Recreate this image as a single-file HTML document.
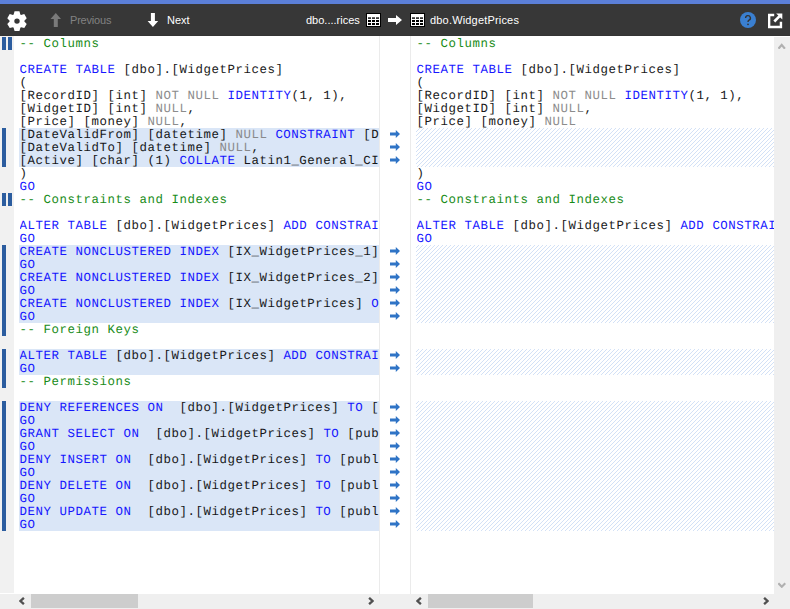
<!DOCTYPE html>
<html><head><meta charset="utf-8"><style>
html,body{margin:0;padding:0}
body{width:790px;height:609px;overflow:hidden;position:relative;background:#fff;font-family:"Liberation Sans",sans-serif}
#top{position:absolute;left:0;top:0;width:790px;height:4px;background:#5b7fd8}
#tb{position:absolute;left:0;top:4px;width:790px;height:32px;background:#373737}
#tbl{position:absolute;left:0;top:35px;width:790px;height:1px;background:#343434}
#tbl2{position:absolute;left:0;top:36px;width:790px;height:1px;background:#f6f6f6;z-index:2}
.tt{position:absolute;top:4px;height:32px;line-height:32px;font-size:11px;white-space:nowrap}
#lg{position:absolute;left:0;top:36px;width:14px;height:557px;background:#f1f1f1}
.bar{position:absolute;left:2px;width:4px;background:#2c5d9f}
.bar.b2{left:8px}
.hl{position:absolute;left:19px;width:360px;background:#dae6f7}
.hatch{position:absolute;left:416px}
.code{position:absolute;top:38px;font-family:"Liberation Mono",monospace;font-size:12.4px;letter-spacing:0.56px;line-height:13px;text-rendering:geometricPrecision;white-space:pre;color:#000;overflow:hidden;opacity:0.9}
.ln{height:13px}
#lc{left:19.5px;width:359.5px}
#rc{left:416.5px;width:357.5px}
.k{color:#0000ff}.g{color:#808080}.c{color:#008000}
.vl{position:absolute;top:36px;width:1px;height:558px;background:#ebebeb}
.arr{position:absolute;left:390px}
#vs{position:absolute;left:774px;top:37px;width:16px;height:557px;background:#efefef}
#hs{position:absolute;left:0;top:594px;width:790px;height:15px;background:#efefef}
.thumb{position:absolute;top:594px;height:14px;background:#cdcdcd}

</style></head><body>
<svg width="0" height="0" style="position:absolute"><defs><pattern id="hp" width="4" height="4" patternUnits="userSpaceOnUse"><rect x="2" y="0" width="1" height="1" fill="#d3e1f6"/><rect x="1" y="1" width="1" height="1" fill="#d3e1f6"/><rect x="0" y="2" width="1" height="1" fill="#d3e1f6"/><rect x="3" y="3" width="1" height="1" fill="#d3e1f6"/></pattern></defs></svg>
<div id="top"></div>
<div id="tb"></div>
<div id="tbl"></div>

<!-- gear -->
<svg style="position:absolute;left:6px;top:10px" width="22" height="22" viewBox="0 0 22 22"><path transform="translate(0.5 0.6)" fill="#fff" fill-rule="evenodd" d="M7.14 3.91 L8.06 0.70 L12.94 0.70 L13.86 3.91 L14.53 4.29 L17.77 3.48 L20.21 7.72 L17.89 10.11 L17.89 10.89 L20.21 13.28 L17.77 17.52 L14.53 16.71 L13.86 17.09 L12.94 20.30 L8.06 20.30 L7.14 17.09 L6.47 16.71 L3.23 17.52 L0.79 13.28 L3.11 10.89 L3.11 10.11 L0.79 7.72 L3.23 3.48 L6.47 4.29 Z M10.5 7.8 A2.7 2.7 0 1 0 10.5 13.2 A2.7 2.7 0 1 0 10.5 7.8 Z"/></svg>
<!-- prev -->
<svg style="position:absolute;left:50px;top:13px" width="11" height="14" viewBox="0 0 11 14"><path fill="#7a7a7a" transform="translate(0.5 0)" d="M5.3 0 L10.6 6 H7.3 V14 H3.3 V6 H0 Z"/></svg>
<div class="tt" style="left:70px;color:#828282;letter-spacing:-0.2px">Previous</div>
<svg style="position:absolute;left:147px;top:13px" width="11" height="14" viewBox="0 0 11 14"><path fill="#fff" transform="translate(0.6 0)" d="M5.3 14 L10.6 8 H7.3 V0 H3.3 V8 H0 Z"/></svg>
<div class="tt" style="left:167px;color:#fff">Next</div>
<div class="tt" style="left:306px;color:#fff">dbo....rices</div>
<svg style="position:absolute;left:366px;top:13px" width="15" height="14" viewBox="0 0 15 14"><rect x="0.5" y="0.5" width="14" height="13" fill="#fff" stroke="#000"/><g fill="#000"><rect x="2" y="4.3" width="3" height="1.6" fill="#222"/><rect x="6" y="4.3" width="3" height="1.6" fill="#222"/><rect x="10" y="4.3" width="3" height="1.6" fill="#222"/><rect x="2" y="7" width="3" height="2"/><rect x="6" y="7" width="3" height="2"/><rect x="10" y="7" width="3" height="2"/><rect x="2" y="10" width="3" height="2"/><rect x="6" y="10" width="3" height="2"/><rect x="10" y="10" width="3" height="2"/></g></svg>
<svg style="position:absolute;left:388px;top:15px" width="14" height="10" viewBox="0 0 14 10"><path fill="#fff" d="M0 3 H8 V0 L14 5 L8 10 V7 H0 Z"/></svg>
<svg style="position:absolute;left:410px;top:13px" width="15" height="14" viewBox="0 0 15 14"><rect x="0.5" y="0.5" width="14" height="13" fill="#fff" stroke="#000"/><g fill="#000"><rect x="2" y="4.3" width="3" height="1.6" fill="#222"/><rect x="6" y="4.3" width="3" height="1.6" fill="#222"/><rect x="10" y="4.3" width="3" height="1.6" fill="#222"/><rect x="2" y="7" width="3" height="2"/><rect x="6" y="7" width="3" height="2"/><rect x="10" y="7" width="3" height="2"/><rect x="2" y="10" width="3" height="2"/><rect x="6" y="10" width="3" height="2"/><rect x="10" y="10" width="3" height="2"/></g></svg>
<div class="tt" style="left:430px;color:#fff;letter-spacing:0.18px">dbo.WidgetPrices</div>
<!-- help -->
<svg style="position:absolute;left:740px;top:12px" width="16" height="16" viewBox="0 0 16 16"><circle cx="8" cy="8" r="8" fill="#3a7fd0"/><path d="M5.6 6 A2.4 2.4 0 1 1 9 8.2 Q8 8.8 8 10" fill="none" stroke="#333" stroke-width="1.4"/><circle cx="8" cy="12.3" r="0.9" fill="#333"/></svg>
<!-- popout -->
<svg style="position:absolute;left:768px;top:13px" width="16" height="16" viewBox="0 0 16 16"><path fill="none" stroke="#fff" stroke-width="2.4" d="M6.2 1.95 H1.15 V13.95 H12.95 V8.8"/><path fill="#fff" d="M14.3 0.5 V6.6 L8.2 0.5 Z"/><path stroke="#fff" stroke-width="2.6" d="M6.3 8.5 L11.6 3.2"/></svg>

<div id="lg"></div>
<div class="bar" style="top:128px;height:39px"></div>
<div class="bar" style="top:245px;height:91px"></div>
<div class="bar" style="top:349px;height:39px"></div>
<div class="bar" style="top:401px;height:130px"></div>
<div class="bar" style="top:37px;height:13px"></div><div class="bar b2" style="top:37px;height:13px"></div>
<div class="bar" style="top:193px;height:13px"></div><div class="bar b2" style="top:193px;height:13px"></div>
<div class="hl" style="top:128px;height:39px"></div>
<div class="hl" style="top:245px;height:78px"></div>
<div class="hl" style="top:349px;height:26px"></div>
<div class="hl" style="top:401px;height:130px"></div>
<svg style="position:absolute;left:416px;top:37px" width="358" height="557"><rect x="0" y="91" width="358" height="39" fill="url(#hp)"/><rect x="0" y="208" width="358" height="78" fill="url(#hp)"/><rect x="0" y="312" width="358" height="26" fill="url(#hp)"/><rect x="0" y="364" width="358" height="130" fill="url(#hp)"/></svg>
<div id="lc" class="code"><div class="ln"><span class="c">-- Columns</span></div><div class="ln"></div><div class="ln"><span class="k">CREATE</span> <span class="k">TABLE</span> [dbo].[WidgetPrices]</div><div class="ln">(</div><div class="ln">[RecordID] [int] <span class="g">NOT</span> <span class="g">NULL</span> <span class="k">IDENTITY</span>(1, 1),</div><div class="ln">[WidgetID] [int] <span class="g">NULL</span>,</div><div class="ln">[Price] [money] <span class="g">NULL</span>,</div><div class="ln">[DateValidFrom] [datetime] <span class="g">NULL</span> <span class="k">CONSTRAINT</span> [D</div><div class="ln">[DateValidTo] [datetime] <span class="g">NULL</span>,</div><div class="ln">[Active] [char] (1) <span class="k">COLLATE</span> Latin1_General_CI</div><div class="ln">)</div><div class="ln"><span class="k">GO</span></div><div class="ln"><span class="c">-- Constraints and Indexes</span></div><div class="ln"></div><div class="ln"><span class="k">ALTER</span> <span class="k">TABLE</span> [dbo].[WidgetPrices] <span class="k">ADD</span> <span class="k">CONSTRAI</span></div><div class="ln"><span class="k">GO</span></div><div class="ln"><span class="k">CREATE</span> <span class="k">NONCLUSTERED</span> <span class="k">INDEX</span> [IX_WidgetPrices_1]</div><div class="ln"><span class="k">GO</span></div><div class="ln"><span class="k">CREATE</span> <span class="k">NONCLUSTERED</span> <span class="k">INDEX</span> [IX_WidgetPrices_2]</div><div class="ln"><span class="k">GO</span></div><div class="ln"><span class="k">CREATE</span> <span class="k">NONCLUSTERED</span> <span class="k">INDEX</span> [IX_WidgetPrices] <span class="k">O</span></div><div class="ln"><span class="k">GO</span></div><div class="ln"><span class="c">-- Foreign Keys</span></div><div class="ln"></div><div class="ln"><span class="k">ALTER</span> <span class="k">TABLE</span> [dbo].[WidgetPrices] <span class="k">ADD</span> <span class="k">CONSTRAI</span></div><div class="ln"><span class="k">GO</span></div><div class="ln"><span class="c">-- Permissions</span></div><div class="ln"></div><div class="ln"><span class="k">DENY</span> <span class="k">REFERENCES</span> <span class="k">ON</span>  [dbo].[WidgetPrices] <span class="k">TO</span> [</div><div class="ln"><span class="k">GO</span></div><div class="ln"><span class="k">GRANT</span> <span class="k">SELECT</span> <span class="k">ON</span>  [dbo].[WidgetPrices] <span class="k">TO</span> [pub</div><div class="ln"><span class="k">GO</span></div><div class="ln"><span class="k">DENY</span> <span class="k">INSERT</span> <span class="k">ON</span>  [dbo].[WidgetPrices] <span class="k">TO</span> [publ</div><div class="ln"><span class="k">GO</span></div><div class="ln"><span class="k">DENY</span> <span class="k">DELETE</span> <span class="k">ON</span>  [dbo].[WidgetPrices] <span class="k">TO</span> [publ</div><div class="ln"><span class="k">GO</span></div><div class="ln"><span class="k">DENY</span> <span class="k">UPDATE</span> <span class="k">ON</span>  [dbo].[WidgetPrices] <span class="k">TO</span> [publ</div><div class="ln"><span class="k">GO</span></div></div>
<div id="rc" class="code"><div class="ln"><span class="c">-- Columns</span></div><div class="ln"></div><div class="ln"><span class="k">CREATE</span> <span class="k">TABLE</span> [dbo].[WidgetPrices]</div><div class="ln">(</div><div class="ln">[RecordID] [int] <span class="g">NOT</span> <span class="g">NULL</span> <span class="k">IDENTITY</span>(1, 1),</div><div class="ln">[WidgetID] [int] <span class="g">NULL</span>,</div><div class="ln">[Price] [money] <span class="g">NULL</span></div><div class="ln"></div><div class="ln"></div><div class="ln"></div><div class="ln">)</div><div class="ln"><span class="k">GO</span></div><div class="ln"><span class="c">-- Constraints and Indexes</span></div><div class="ln"></div><div class="ln"><span class="k">ALTER</span> <span class="k">TABLE</span> [dbo].[WidgetPrices] <span class="k">ADD</span> <span class="k">CONSTRAI</span></div><div class="ln"><span class="k">GO</span></div></div>
<svg class="arr" style="top:130px" width="10" height="9" viewBox="0 0 10 9"><path d="M0 2.4H5.8V0L10 4L5.8 8V5.6H0Z" fill="#2f74c6"/></svg>
<svg class="arr" style="top:143px" width="10" height="9" viewBox="0 0 10 9"><path d="M0 2.4H5.8V0L10 4L5.8 8V5.6H0Z" fill="#2f74c6"/></svg>
<svg class="arr" style="top:156px" width="10" height="9" viewBox="0 0 10 9"><path d="M0 2.4H5.8V0L10 4L5.8 8V5.6H0Z" fill="#2f74c6"/></svg>
<svg class="arr" style="top:247px" width="10" height="9" viewBox="0 0 10 9"><path d="M0 2.4H5.8V0L10 4L5.8 8V5.6H0Z" fill="#2f74c6"/></svg>
<svg class="arr" style="top:260px" width="10" height="9" viewBox="0 0 10 9"><path d="M0 2.4H5.8V0L10 4L5.8 8V5.6H0Z" fill="#2f74c6"/></svg>
<svg class="arr" style="top:273px" width="10" height="9" viewBox="0 0 10 9"><path d="M0 2.4H5.8V0L10 4L5.8 8V5.6H0Z" fill="#2f74c6"/></svg>
<svg class="arr" style="top:286px" width="10" height="9" viewBox="0 0 10 9"><path d="M0 2.4H5.8V0L10 4L5.8 8V5.6H0Z" fill="#2f74c6"/></svg>
<svg class="arr" style="top:299px" width="10" height="9" viewBox="0 0 10 9"><path d="M0 2.4H5.8V0L10 4L5.8 8V5.6H0Z" fill="#2f74c6"/></svg>
<svg class="arr" style="top:312px" width="10" height="9" viewBox="0 0 10 9"><path d="M0 2.4H5.8V0L10 4L5.8 8V5.6H0Z" fill="#2f74c6"/></svg>
<svg class="arr" style="top:351px" width="10" height="9" viewBox="0 0 10 9"><path d="M0 2.4H5.8V0L10 4L5.8 8V5.6H0Z" fill="#2f74c6"/></svg>
<svg class="arr" style="top:364px" width="10" height="9" viewBox="0 0 10 9"><path d="M0 2.4H5.8V0L10 4L5.8 8V5.6H0Z" fill="#2f74c6"/></svg>
<svg class="arr" style="top:403px" width="10" height="9" viewBox="0 0 10 9"><path d="M0 2.4H5.8V0L10 4L5.8 8V5.6H0Z" fill="#2f74c6"/></svg>
<svg class="arr" style="top:416px" width="10" height="9" viewBox="0 0 10 9"><path d="M0 2.4H5.8V0L10 4L5.8 8V5.6H0Z" fill="#2f74c6"/></svg>
<svg class="arr" style="top:429px" width="10" height="9" viewBox="0 0 10 9"><path d="M0 2.4H5.8V0L10 4L5.8 8V5.6H0Z" fill="#2f74c6"/></svg>
<svg class="arr" style="top:442px" width="10" height="9" viewBox="0 0 10 9"><path d="M0 2.4H5.8V0L10 4L5.8 8V5.6H0Z" fill="#2f74c6"/></svg>
<svg class="arr" style="top:455px" width="10" height="9" viewBox="0 0 10 9"><path d="M0 2.4H5.8V0L10 4L5.8 8V5.6H0Z" fill="#2f74c6"/></svg>
<svg class="arr" style="top:468px" width="10" height="9" viewBox="0 0 10 9"><path d="M0 2.4H5.8V0L10 4L5.8 8V5.6H0Z" fill="#2f74c6"/></svg>
<svg class="arr" style="top:481px" width="10" height="9" viewBox="0 0 10 9"><path d="M0 2.4H5.8V0L10 4L5.8 8V5.6H0Z" fill="#2f74c6"/></svg>
<svg class="arr" style="top:494px" width="10" height="9" viewBox="0 0 10 9"><path d="M0 2.4H5.8V0L10 4L5.8 8V5.6H0Z" fill="#2f74c6"/></svg>
<svg class="arr" style="top:507px" width="10" height="9" viewBox="0 0 10 9"><path d="M0 2.4H5.8V0L10 4L5.8 8V5.6H0Z" fill="#2f74c6"/></svg>
<svg class="arr" style="top:520px" width="10" height="9" viewBox="0 0 10 9"><path d="M0 2.4H5.8V0L10 4L5.8 8V5.6H0Z" fill="#2f74c6"/></svg>
<div class="vl" style="left:379px"></div>
<div class="vl" style="left:410px"></div>
<div id="vs"></div>
<svg style="position:absolute;left:778px;top:43px" width="8" height="6" viewBox="0 0 8 6"><path d="M0.5 5.7 L3.7 1.9 L6.9 5.7" fill="none" stroke="#b0b0b0" stroke-width="2.2"/></svg>
<svg style="position:absolute;left:778px;top:582px" width="8" height="6" viewBox="0 0 8 6"><path d="M0.3 1.2 L3.8 4.7 L7.3 1.2" fill="none" stroke="#b0b0b0" stroke-width="2.2"/></svg>
<div id="hs"></div>
<div class="thumb" style="left:31px;width:107px"></div>
<div class="thumb" style="left:428px;width:105px"></div>
<svg style="position:absolute;left:19px;top:597px" width="6" height="8" viewBox="0 0 6 8"><path d="M4.9 0.8 L1.5 4 L4.9 7.2" fill="none" stroke="#505050" stroke-width="2.3" stroke-linejoin="miter"/></svg>
<svg style="position:absolute;left:368px;top:597px" width="6" height="8" viewBox="0 0 6 8"><path d="M1.1 0.8 L4.5 4 L1.1 7.2" fill="none" stroke="#505050" stroke-width="2.3" stroke-linejoin="miter"/></svg>
<svg style="position:absolute;left:416px;top:597px" width="6" height="8" viewBox="0 0 6 8"><path d="M4.9 0.8 L1.5 4 L4.9 7.2" fill="none" stroke="#505050" stroke-width="2.3" stroke-linejoin="miter"/></svg>
<svg style="position:absolute;left:763px;top:597px" width="6" height="8" viewBox="0 0 6 8"><path d="M1.1 0.8 L4.5 4 L1.1 7.2" fill="none" stroke="#505050" stroke-width="2.3" stroke-linejoin="miter"/></svg>
</body></html>
